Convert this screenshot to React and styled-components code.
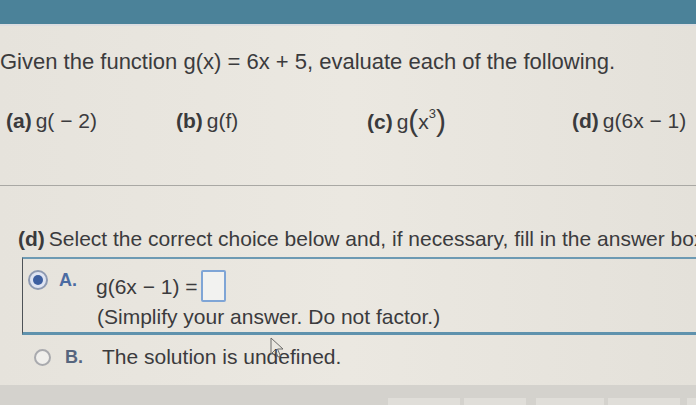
import React from "react";
import styled, { createGlobalStyle } from "styled-components";

const GlobalStyle = createGlobalStyle`
  html, body {
    margin: 0;
    padding: 0;
    background: #e8e5de;
  }
  body {
    font-family: "Liberation Sans", Arial, sans-serif;
    color: #3b3b3d;
    overflow: hidden;
  }
`;

const Page = styled.div`
  position: relative;
  width: 696px;
  height: 405px;
  display: flex;
  flex-direction: column;
  background: linear-gradient(90deg, #e6e3dc 0%, #ebe8e1 50%, #e4e1da 100%);
  overflow: hidden;
`;

const TopBar = styled.div`
  height: 24px;
  flex-shrink: 0;
  background: #4b8299;
  border-bottom: 2px solid #dcdde0;
`;

const Question = styled.div`
  padding: 21px 0 0 0;
  font-size: 22px;
  height: 30px;
  line-height: 30px;
  white-space: nowrap;
`;

const Parts = styled.div`
  display: grid;
  grid-template-columns: 170px 191px 205px auto;
  padding: 27px 0 0 6px;
  font-size: 21px;
  height: 32px;
  align-items: center;
  white-space: nowrap;
`;

const Label = styled.b`
  font-weight: bold;
  color: #3a3a3c;
  margin-right: 4px;
`;

const BigParen = styled.span`
  font-size: 30px;
  font-weight: 300;
  vertical-align: -2px;
`;

const Sup = styled.sup`
  font-size: 13px;
  vertical-align: 11px;
`;

const Rule = styled.div`
  margin-top: 49px;
  height: 1px;
  background: #a9a8a4;
  flex-shrink: 0;
`;

const Prompt = styled.div`
  padding: 40px 0 0 18px;
  font-size: 21px;
  height: 26px;
  line-height: 26px;
  white-space: nowrap;
`;

const ChoiceBox = styled.div`
  margin: 5px 0 0 22px;
  border-top: 2px solid #6d9ab3;
  border-left: 1px solid #4d5257;
  border-bottom: 3px solid #5f92ad;
  padding: 11px 0 4px 5px;
  display: flex;
  flex-direction: column;
  gap: 4px;
`;

const ChoiceRow = styled.div`
  display: flex;
  align-items: flex-start;
`;

const Radio = styled.span`
  width: ${(p) => p.$size}px;
  height: ${(p) => p.$size}px;
  border-radius: 50%;
  box-sizing: border-box;
  border: 2px solid ${(p) => (p.$checked ? "#8e9ab2" : "#a9aaae")};
  background: ${(p) => (p.$checked ? "#dfe4f2" : "#f0efec")};
  display: flex;
  align-items: center;
  justify-content: center;
  flex-shrink: 0;
  &::after {
    content: "";
    display: ${(p) => (p.$checked ? "block" : "none")};
    width: 10px;
    height: 10px;
    border-radius: 50%;
    background: #3d5fa0;
  }
`;

const Letter = styled.b`
  box-sizing: border-box;
  font-size: 18px;
  line-height: 20px;
  color: ${(p) => p.$color};
  width: ${(p) => p.$w}px;
  padding-left: ${(p) => p.$gap}px;
  flex-shrink: 0;
`;

const Expr = styled.span`
  font-size: 21px;
  display: flex;
  align-items: flex-end;
  gap: 3px;
  line-height: 24px;
`;

const AnswerBox = styled.span`
  display: inline-block;
  width: 25px;
  height: 32px;
  box-sizing: border-box;
  border: 2px solid #7fa5d6;
  background: #f2f2f0;
  border-radius: 2px;
`;

const ExprText = styled.span`
  margin-bottom: 3px;
`;

const Hint = styled.div`
  padding-left: 69px;
  font-size: 21px;
  line-height: 22px;
`;

const OtherChoice = styled.div`
  padding: 12px 0 0 34px;
  display: flex;
  align-items: center;
  height: 20px;
`;

const Footer = styled.div`
  margin-top: auto;
  height: 20px;
  background: #d4d2cd;
  display: flex;
  gap: 4px;
  padding-left: 388px;
  align-items: flex-end;
`;

const Tile = styled.div`
  width: ${(p) => p.$w}px;
  height: 7px;
  background: #e0ded9;
  margin-right: ${(p) => p.$after || 0}px;
  flex-shrink: 0;
`;

const Cursor = styled.svg`
  position: absolute;
  left: 270px;
  top: 337px;
`;

export default function App() {
  return (
    <>
      <GlobalStyle />
      <Page>
        <TopBar />
        <Question>
          Given the function g(x) = 6x + 5, evaluate each of the following.
        </Question>
        <Parts>
          <span>
            <Label>(a)</Label>g( − 2)
          </span>
          <span>
            <Label>(b)</Label>g(f)
          </span>
          <span>
            <Label>(c)</Label>g<BigParen>(</BigParen>x<Sup>3</Sup>
            <BigParen>)</BigParen>
          </span>
          <span>
            <Label>(d)</Label>g(6x − 1)
          </span>
        </Parts>
        <Rule />
        <Prompt>
          <Label>(d)</Label>Select the correct choice below and, if necessary,
          fill in the answer box to complete your choice.
        </Prompt>
        <ChoiceBox>
          <ChoiceRow>
            <Radio $size={20} $checked />
            <Letter $color="#4b6ba2" $w={48} $gap={11}>
              A.
            </Letter>
            <Expr>
              <ExprText>g(6x − 1) =</ExprText>
              <AnswerBox />
            </Expr>
          </ChoiceRow>
          <Hint>(Simplify your answer. Do not factor.)</Hint>
        </ChoiceBox>
        <OtherChoice>
          <Radio $size={17} />
          <Letter $color="#56657e" $w={51} $gap={14}>
            B.
          </Letter>
          <Expr>The solution is undefined.</Expr>
        </OtherChoice>
        <Footer>
          <Tile $w={72} />
          <Tile $w={62} $after={6} />
          <Tile $w={68} />
          <Tile $w={72} $after={3} />
          <Tile $w={20} />
        </Footer>
        <Cursor width="14" height="22" viewBox="0 0 14 22">
          <path
            d="M1 1 L1 17 L5 13 L8 20 L10.5 19 L7.5 12 L13 12 Z"
            fill="none"
            stroke="#6b6a68"
            strokeWidth="1"
            strokeLinejoin="round"
          />
        </Cursor>
      </Page>
    </>
  );
}
